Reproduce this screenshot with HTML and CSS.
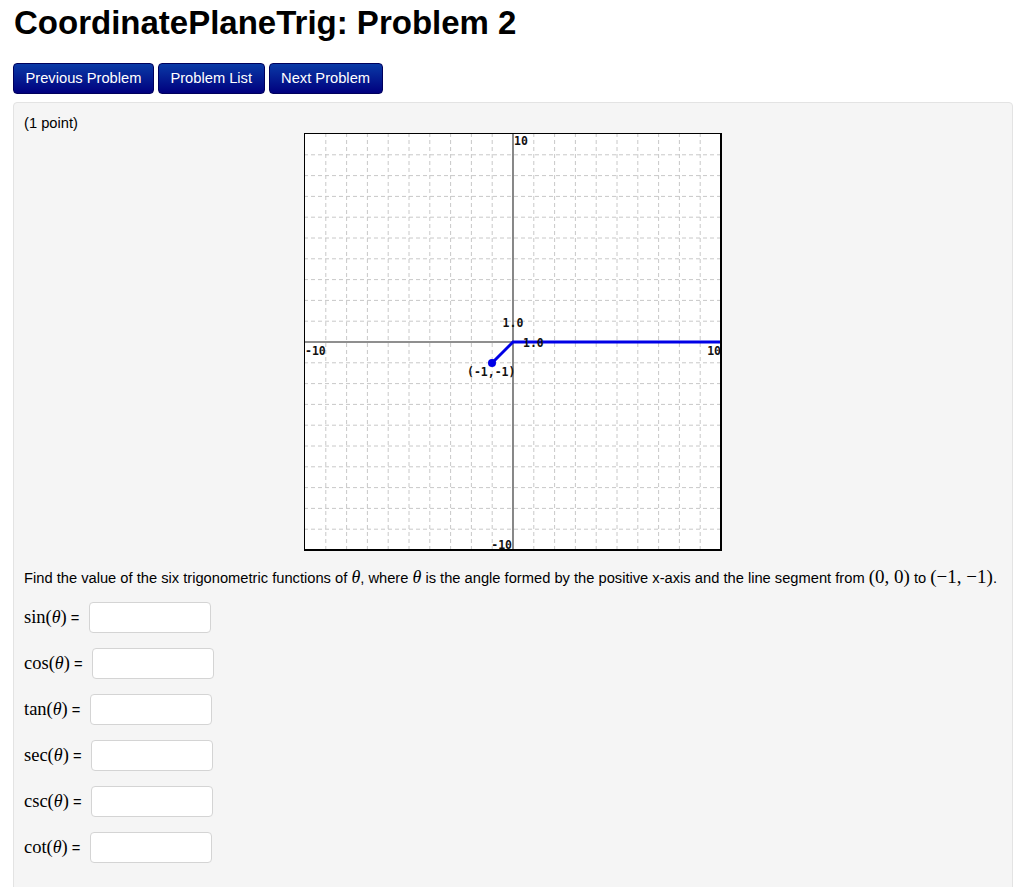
FILE: index.html
```html
<!DOCTYPE html>
<html>
<head>
<meta charset="utf-8">
<title>CoordinatePlaneTrig: Problem 2</title>
<link rel="stylesheet" href="styles.css">
</head>
<body>
<h1 class="title">CoordinatePlaneTrig: Problem 2</h1>
<div class="nav">
  <a class="btn">Previous Problem</a>
  <a class="btn">Problem List</a>
  <a class="btn">Next Problem</a>
</div>
<div class="problem">
  <div class="points">(1 point)</div>
  <div class="graph-wrap">
    <svg class="graph" width="418" height="418" viewBox="0 0 418 418" xmlns="http://www.w3.org/2000/svg">
      <rect x="0" y="0" width="418" height="418" fill="#fff"/>
      <g id="grid" stroke="#c8c8c8" stroke-width="1" stroke-dasharray="4 3"></g>
      <g stroke="#6a6a6a" stroke-width="1.6">
        <line x1="0" y1="209" x2="418" y2="209"/>
        <line x1="209" y1="0" x2="209" y2="418"/>
      </g>
      <g class="lbl">
        <text x="210" y="12">10</text>
        <text x="1" y="222">-10</text>
        <text x="417" y="222" text-anchor="end">10</text>
        <text x="208" y="416" text-anchor="end">-10</text>
        <text x="209" y="194" text-anchor="middle">1.0</text>
      </g>
      <g stroke="#0000e6" stroke-width="3" fill="none" stroke-linecap="round">
        <polyline points="188,230 209,209 418,209"/>
      </g>
      <circle cx="188" cy="230" r="4" fill="#0000e6"/>
      <g class="lbl">
        <text x="219" y="214">1.0</text>
        <text x="163" y="243">(-1,-1)</text>
      </g>
      <rect x="0.5" y="0.5" width="416" height="416" fill="none" stroke="#000" stroke-width="1"/>
      <line x1="417" y1="0" x2="417" y2="418" stroke="#000" stroke-width="2"/>
      <line x1="0" y1="417" x2="418" y2="417" stroke="#000" stroke-width="2"/>
    </svg>
  </div>
  <p class="question">Find the value of the six trigonometric functions of <span class="mi">θ</span>, where <span class="mi">θ</span> is the angle formed by the positive x-axis and the line segment from <span class="math">(0, 0)</span> to <span class="math">(−1, −1)</span>.</p>
  <div class="row"><span class="math">sin(<span class="mi">θ</span>)</span> = <input class="ans" type="text"></div>
  <div class="row"><span class="math">cos(<span class="mi">θ</span>)</span> = <input class="ans" type="text"></div>
  <div class="row"><span class="math">tan(<span class="mi">θ</span>)</span> = <input class="ans" type="text"></div>
  <div class="row"><span class="math">sec(<span class="mi">θ</span>)</span> = <input class="ans" type="text"></div>
  <div class="row"><span class="math">csc(<span class="mi">θ</span>)</span> = <input class="ans" type="text"></div>
  <div class="row"><span class="math">cot(<span class="mi">θ</span>)</span> = <input class="ans" type="text"></div>
</div>
<script>
  (function () {
    var g = document.getElementById('grid');
    var ns = 'http://www.w3.org/2000/svg';
    for (var k = 1; k < 20; k++) {
      if (k === 10) continue;
      var p = 1 + k * 20.8;
      var v = document.createElementNS(ns, 'line');
      v.setAttribute('x1', p); v.setAttribute('x2', p);
      v.setAttribute('y1', 0); v.setAttribute('y2', 418);
      g.appendChild(v);
      var h = document.createElementNS(ns, 'line');
      h.setAttribute('y1', p); h.setAttribute('y2', p);
      h.setAttribute('x1', 0); h.setAttribute('x2', 418);
      g.appendChild(h);
    }
  })();
</script>
</body>
</html>
```

FILE: styles.css
```css
html, body {
  margin: 0;
  padding: 0;
  background: #fff;
}
body {
  padding: 0 11px 0 13px;
  font-family: "Liberation Sans", Arial, sans-serif;
  font-size: 14.7px;
  color: #000;
}
.title {
  margin: 4px 0 0 1px;
  font-size: 33px;
  font-weight: bold;
  line-height: 37px;
}
.nav {
  margin-top: 22px;
  display: flex;
  gap: 4px;
}
.btn {
  display: inline-block;
  height: 29px;
  line-height: 29px;
  padding: 0 11.5px;
  border: 1px solid #00005c;
  border-radius: 4px;
  color: #fff;
  font-size: 14.7px;
  background: linear-gradient(#0a3aa6, #00007e);
  text-decoration: none;
  cursor: pointer;
}
.problem {
  margin-top: 8px;
  background: #f5f5f5;
  border: 1px solid #e3e3e3;
  border-radius: 4px;
  padding: 10px 10px 40px 10px;
  min-height: 800px;
}
.points {
  line-height: 20px;
}
.graph-wrap {
  display: flex;
  justify-content: center;
}
.graph {
  display: block;
}
.lbl text {
  font-family: "DejaVu Sans Mono", monospace;
  font-weight: bold;
  font-size: 11.5px;
  fill: #111;
}
.question {
  margin: 16px 0 14px 0;
  line-height: 20px;
}
.math {
  font-family: "Liberation Serif", "Times New Roman", serif;
  font-size: 19px;
}
.mi {
  font-family: "Liberation Serif", "Times New Roman", serif;
  font-style: italic;
  font-size: 18px;
}
.row {
  display: flex;
  align-items: center;
  height: 31px;
  margin-bottom: 15px;
  white-space: pre;
}
.row .math {
  font-size: 18.5px;
}
.ans {
  box-sizing: border-box;
  width: 122px;
  height: 31px;
  margin-left: 5px;
  border: 1px solid #d4d4d4;
  border-radius: 4px;
  background: #fff;
  padding: 4px 6px;
  font-size: 14px;
}
```
